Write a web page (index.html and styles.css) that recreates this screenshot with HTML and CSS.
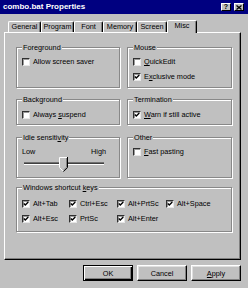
FILE: index.html
```html
<!DOCTYPE html>
<html>
<head>
<meta charset="utf-8">
<title>combo.bat Properties</title>
<link rel="stylesheet" href="styles.css">
</head>
<body>
<div class="titlebar">
  <span class="title">combo.bat Properties</span>
  <span class="tbtn help">?</span>
  <span class="tbtn close"><svg width="6" height="5" viewBox="0 0 6 5"><path d="M0.5 0.5L5.5 4.5M5.5 0.5L0.5 4.5" stroke="#000" stroke-width="1.3" fill="none"/></svg></span>
</div>
<div class="tabs">
  <span class="tab w33">General</span>
  <span class="tab w33">Program</span>
  <span class="tab w29">Font</span>
  <span class="tab w34">Memory</span>
  <span class="tab w30">Screen</span>
  <span class="tab active w30">Misc</span>
</div>
<div class="panel">
  <div class="row r1">
    <div class="group h41">
      <div class="gtitle">Foreground</div>
      <div class="cb first5"><span class="box"></span>Allow screen saver</div>
    </div>
    <div class="group h41">
      <div class="gtitle">Mouse</div>
      <div class="cb first5"><span class="box"></span><span><u>Q</u>uickEdit</span></div>
      <div class="cb next"><span class="box"><svg class="chk" viewBox="0 0 6 6"><path d="M0.8 2.5L2.3 4.1L5.3 1"/></svg></span><span>E<u>x</u>clusive mode</span></div>
    </div>
  </div>
  <div class="row r2">
    <div class="group h26">
      <div class="gtitle">Background</div>
      <div class="cb first6"><span class="box"></span><span>Always <u>s</u>uspend</span></div>
    </div>
    <div class="group h26">
      <div class="gtitle">Termination</div>
      <div class="cb first6"><span class="box"><svg class="chk" viewBox="0 0 6 6"><path d="M0.8 2.5L2.3 4.1L5.3 1"/></svg></span><span><u>W</u>arn if still active</span></div>
    </div>
  </div>
  <div class="row r3">
    <div class="group h41">
      <div class="gtitle">Idle sensiti<u>v</u>ity</div>
      <div class="lohi"><span>Low</span><span>High</span></div>
      <div class="slider">
        <div class="track"></div>
        <svg class="thumb" width="9" height="15" viewBox="0 0 9 15">
          <path d="M0 0H9V10.5L4.5 15L0 10.5Z" fill="#c0c0c0"/>
          <path d="M0.5 10.5V0.5H8" stroke="#fff" fill="none"/>
          <path d="M8.5 0V10.6L4.5 14.6" stroke="#000" fill="none"/>
          <path d="M7.5 1V10.2L4.5 13.2" stroke="#808080" fill="none"/>
          <path d="M0.5 10.6L3.8 13.9" stroke="#fff" fill="none"/>
        </svg>
      </div>
    </div>
    <div class="group h41">
      <div class="gtitle">Other</div>
      <div class="cb first5"><span class="box"></span><span><u>F</u>ast pasting</span></div>
    </div>
  </div>
  <div class="row r4">
    <div class="group wide h45">
      <div class="gtitle">Windows shortcut <u>k</u>eys</div>
      <div class="keys">
        <div class="cb"><span class="box"><svg class="chk" viewBox="0 0 6 6"><path d="M0.8 2.5L2.3 4.1L5.3 1"/></svg></span>Alt+Tab</div>
        <div class="cb"><span class="box"><svg class="chk" viewBox="0 0 6 6"><path d="M0.8 2.5L2.3 4.1L5.3 1"/></svg></span>Ctrl+Esc</div>
        <div class="cb"><span class="box"><svg class="chk" viewBox="0 0 6 6"><path d="M0.8 2.5L2.3 4.1L5.3 1"/></svg></span>Alt+PrtSc</div>
        <div class="cb"><span class="box"><svg class="chk" viewBox="0 0 6 6"><path d="M0.8 2.5L2.3 4.1L5.3 1"/></svg></span>Alt+Space</div>
        <div class="cb"><span class="box"><svg class="chk" viewBox="0 0 6 6"><path d="M0.8 2.5L2.3 4.1L5.3 1"/></svg></span>Alt+Esc</div>
        <div class="cb"><span class="box"><svg class="chk" viewBox="0 0 6 6"><path d="M0.8 2.5L2.3 4.1L5.3 1"/></svg></span>PrtSc</div>
        <div class="cb"><span class="box"><svg class="chk" viewBox="0 0 6 6"><path d="M0.8 2.5L2.3 4.1L5.3 1"/></svg></span>Alt+Enter</div>
      </div>
    </div>
  </div>
</div>
<div class="buttons">
  <span class="btn default">OK</span>
  <span class="btn">Cancel</span>
  <span class="btn"><span><u>A</u>pply</span></span>
</div>
</body>
</html>
```
FILE: styles.css
```css
* { box-sizing: border-box; margin: 0; padding: 0; }
html, body { width: 248px; height: 288px; overflow: hidden; }
body {
  background: #c0c0c0;
  font-family: "Liberation Sans", Arial, sans-serif;
  font-size: 7.3px;
  line-height: 9px;
  color: #000;
}
u { text-decoration-thickness: 1px; text-underline-offset: 1px; }

.titlebar {
  height: 14px;
  background: #000080;
  display: flex;
  align-items: center;
  padding: 0 4px 0 3px;
}
.title {
  flex: 1;
  color: #fff;
  font-weight: bold;
  font-size: 8px;
  line-height: 10px;
}
.tbtn {
  width: 10px;
  height: 8px;
  background: #c0c0c0;
  border: 1px solid;
  border-color: #fff #000 #000 #fff;
  display: flex;
  align-items: center;
  justify-content: center;
  font-weight: bold;
  font-size: 7px;
  line-height: 6px;
}
.tbtn + .tbtn { margin-left: 3px; }

.tabs {
  display: flex;
  align-items: flex-end;
  height: 12px;
  margin-top: 6px;
  padding-left: 8px;
}
.tab {
  height: 11px;
  border: 1px solid;
  border-bottom: 0;
  border-color: #fff #000 transparent #fff;
  border-radius: 2px 2px 0 0;
  box-shadow: inset -1px 0 #808080;
  line-height: 10px;
  text-align: center;
}
.tab.active {
  height: 13px;
  margin-bottom: -1px;
  position: relative;
  z-index: 1;
  background: #c0c0c0;
}
.w29 { width: 29px; }
.w30 { width: 30px; }
.w33 { width: 33px; }
.w34 { width: 34px; }

.panel {
  margin-left: 4px;
  width: 237px;
  height: 228px;
  border: 1px solid;
  border-color: #fff #000 #000 #fff;
  box-shadow: inset -1px -1px #808080;
  padding: 14px 0 0 11px;
}
.row {
  display: grid;
  grid-template-columns: 104px 105px;
  column-gap: 7px;
  align-items: start;
}
.r2 { margin-top: 11px; }
.r3 { margin-top: 12px; }
.r4 { margin-top: 9px; }

.group {
  border: 1px solid #888;
  box-shadow: inset 1px 1px #fff, 1px 1px #fff;
  padding: 0 0 0 5px;
}
.wide { grid-column: 1 / span 2; }
.h26 { height: 26px; }
.h41 { height: 41px; }
.h45 { height: 45px; }
.gtitle {
  display: table;
  margin-top: -5px;
  padding: 0 1px;
  background: #c0c0c0;
  line-height: 9px;
}

.cb {
  display: flex;
  align-items: center;
  height: 9px;
  white-space: nowrap;
}
.first5 { margin-top: 5px; }
.first6 { margin-top: 6px; }
.next { margin-top: 6px; }
.box {
  width: 8px;
  height: 8px;
  flex: none;
  margin-right: 3px;
  background: #fff;
  border: 1px solid;
  border-color: #303030 #e6e6e6 #e6e6e6 #303030;
  box-shadow: inset 1px 1px #9a9a9a;
  display: flex;
  align-items: center;
  justify-content: center;
}
.chk {
  width: 6px;
  height: 6px;
}
.chk path {
  fill: none;
  stroke: #000;
  stroke-width: 1.4;
}

.lohi {
  display: flex;
  justify-content: space-between;
  margin-top: 5px;
  padding-right: 13px;
}
.slider {
  position: relative;
  height: 15px;
  margin: 1px 15px 0 2px;
}
.track {
  position: relative;
  top: 5px;
  height: 3px;
  border-top: 1px solid #707070;
  border-bottom: 1px solid #fff;
  background: #404040;
}
.thumb {
  position: absolute;
  left: 35px;
  top: 0;
}

.keys {
  display: grid;
  grid-template-columns: 47px 48px 49px auto;
  row-gap: 6px;
  margin-top: 7px;
}

.buttons {
  display: flex;
  justify-content: flex-end;
  gap: 4px;
  margin-top: 5px;
  padding-right: 7px;
}
.btn {
  width: 50px;
  height: 16px;
  border: 1px solid;
  border-color: #fff #000 #000 #fff;
  box-shadow: inset -1px -1px #808080, inset 1px 1px #dfdfdf;
  display: flex;
  align-items: center;
  justify-content: center;
  line-height: 9px;
}
.btn.default {
  border-color: #000;
  box-shadow: inset 1px 1px #fff, inset -1px -1px #000, inset -2px -2px #808080;
}
```
